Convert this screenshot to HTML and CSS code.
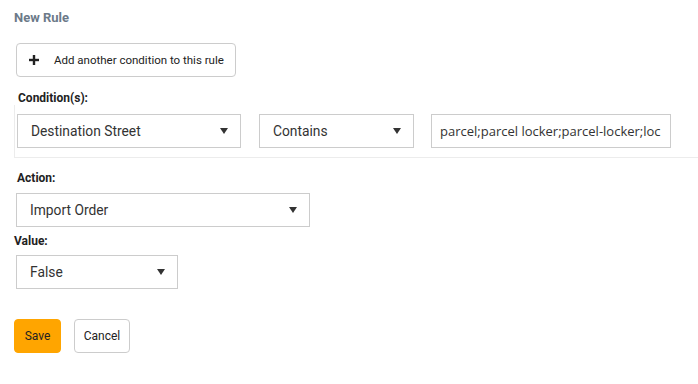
FILE: index.html
```html
<!DOCTYPE html>
<html>
<head>
<meta charset="utf-8">
<link rel="stylesheet" href="styles.css">
</head>
<body>
<div class="page">
  <h2 class="title">New Rule</h2>
  <button class="add-btn"><svg class="plus" width="10" height="10" viewBox="0 0 10 10"><rect x="3.8" y="0" width="2.4" height="10" fill="#222"/><rect x="0" y="3.8" width="10" height="2.4" fill="#222"/></svg><span>Add another condition to this rule</span></button>
  <div class="label cond-label">Condition(s):</div>
  <div class="cond-box">
    <div class="select s-field"><span>Destination Street</span><i class="caret"></i></div>
    <div class="select s-op"><span>Contains</span><i class="caret"></i></div>
    <div class="input">parcel;parcel locker;parcel-locker;loc</div>
  </div>
  <div class="label action-label">Action:</div>
  <div class="select s-action"><span>Import Order</span><i class="caret"></i></div>
  <div class="label value-label">Value:</div>
  <div class="select s-value"><span>False</span><i class="caret"></i></div>
  <div class="buttons">
    <button class="btn save">Save</button>
    <button class="btn cancel">Cancel</button>
  </div>
</div>
</body>
</html>
```
FILE: styles.css
```css
html, body { margin: 0; padding: 0; background: #fff; }
body { font-family: Roboto, "Liberation Sans", sans-serif; color: #222; }
.page { padding: 10px 0 0 14px; display: flex; flex-direction: column; align-items: flex-start; }
.title { margin: 0; font-size: 13px; font-weight: 700; color: #6c7a89; line-height: 16px; }
.add-btn {
  margin: 17px 0 0 2px; height: 34px; width: 220px;
  background: #fff; border: 1px solid #ccc; border-radius: 4px;
  display: flex; align-items: center; padding: 0 0 0 12px;
  font-family: Roboto, "Liberation Sans", sans-serif; font-size: 11.5px; color: #222;
}
.add-btn .plus { margin-right: 15px; }
.label { font-size: 12px; font-weight: 700; color: #222; line-height: 14px; }
.cond-label { margin: 14px 0 0 4px; }
.cond-box {
  align-self: stretch; margin-top: 0; padding: 9px 0 9px 2px;
  border-left: 1px solid #ececec; border-bottom: 1px solid #ececec;
  display: flex; align-items: center;
}
.select {
  box-sizing: border-box; height: 34px; border: 1px solid #ccc; background: #fff;
  display: flex; align-items: center; justify-content: space-between;
  padding: 0 12px 0 13px; font-size: 13.8px; color: #333;
}
.caret { width: 0; height: 0; border-left: 4px solid transparent; border-right: 4px solid transparent; border-top: 6px solid #333; }
.s-field { width: 224px; }
.s-op { width: 155px; margin-left: 18px; }
.input {
  box-sizing: border-box; height: 34px; width: 240px; margin-left: 17px;
  border: 1px solid #ccc; display: flex; align-items: center; padding-left: 8px;
  font-family: "Open Sans", sans-serif; font-size: 13px; color: #333; white-space: nowrap; overflow: hidden;
}
.action-label { margin: 13px 0 0 3px; }
.s-action { width: 294px; margin: 8px 0 0 2px; }
.value-label { margin: 7px 0 0 0; }
.s-value { width: 162px; margin: 7px 0 0 2px; }
.buttons { display: flex; gap: 13px; margin-top: 30px; }
.btn { height: 34px; border-radius: 4px; font-family: Roboto, "Liberation Sans", sans-serif; font-size: 12px; color: #222; padding: 0 8px; }
.save { background: #ffa500; border: 1px solid #ffa500; width: 47px; }
.cancel { background: #fff; border: 1px solid #ccc; width: 56px; }
```
